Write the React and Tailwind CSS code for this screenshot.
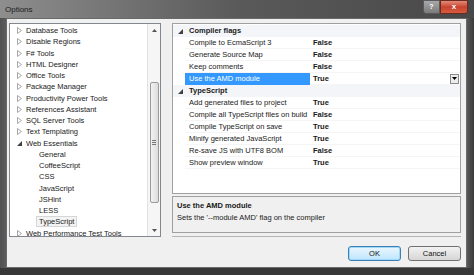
import React from 'react'

const treeItems = [
  { label: 'Database Tools', kind: 'closed' },
  { label: 'Disable Regions', kind: 'closed' },
  { label: 'F# Tools', kind: 'closed' },
  { label: 'HTML Designer', kind: 'closed' },
  { label: 'Office Tools', kind: 'closed' },
  { label: 'Package Manager', kind: 'closed' },
  { label: 'Productivity Power Tools', kind: 'closed' },
  { label: 'References Assistant', kind: 'closed' },
  { label: 'SQL Server Tools', kind: 'closed' },
  { label: 'Text Templating', kind: 'closed' },
  { label: 'Web Essentials', kind: 'open' },
  { label: 'General', kind: 'child' },
  { label: 'CoffeeScript', kind: 'child' },
  { label: 'CSS', kind: 'child' },
  { label: 'JavaScript', kind: 'child' },
  { label: 'JSHint', kind: 'child' },
  { label: 'LESS', kind: 'child' },
  { label: 'TypeScript', kind: 'child', selected: true },
  { label: 'Web Performance Test Tools', kind: 'closed' },
]

const props = [
  { cat: 'Compiler flags' },
  { name: 'Compile to EcmaScript 3', value: 'False' },
  { name: 'Generate Source Map', value: 'False' },
  { name: 'Keep comments', value: 'False' },
  { name: 'Use the AMD module', value: 'True', selected: true },
  { cat: 'TypeScript' },
  { name: 'Add generated files to project', value: 'True' },
  { name: 'Compile all TypeScript files on build', value: 'False' },
  { name: 'Compile TypeScript on save', value: 'True' },
  { name: 'Minify generated JavaScript', value: 'True' },
  { name: 'Re-save JS with UTF8 BOM', value: 'False' },
  { name: 'Show preview window', value: 'True' },
]

function Closed() {
  return (
    <svg width="5" height="7" viewBox="0 0 5 7">
      <path d="M0.5 0.5 L4.5 3.5 L0.5 6.5 Z" fill="none" stroke="#a6a6a6" strokeWidth="1" />
    </svg>
  )
}

function Open() {
  return (
    <svg width="5" height="5" viewBox="0 0 5 5">
      <path d="M5 0 L5 5 L0 5 Z" fill="#404040" />
    </svg>
  )
}

function Tree() {
  return (
    <div className="flex w-[152px] h-[214px] border border-[#828790] bg-white overflow-hidden">
      <div className="flex-1 pt-[1px] overflow-hidden">
        {treeItems.map((it) => (
          <div key={it.label} className="flex items-center h-[11.25px] whitespace-nowrap">
            {it.kind === 'child' ? (
              <div
                className={
                  'ml-[26px] px-[2px] h-[11px] flex items-center ' +
                  (it.selected ? 'bg-[#f3f3f3] border border-[#d6d6d6]' : 'border border-transparent')
                }
              >
                {it.label}
              </div>
            ) : (
              <>
                <div className="w-[16px] pl-[7px] flex items-center">
                  {it.kind === 'open' ? <Open /> : <Closed />}
                </div>
                <span>{it.label}</span>
              </>
            )}
          </div>
        ))}
      </div>
      <div className="w-[13px] flex flex-col items-center border-l border-[#e2e2e2] bg-[#f6f6f6]">
        <div className="h-[12px] flex items-center justify-center">
          <svg width="5" height="3" viewBox="0 0 5 3"><path d="M0 3 L2.5 0 L5 3 Z" fill="#555" /></svg>
        </div>
        <div className="mt-[46px] w-[9px] h-[121px] rounded-[2px] border border-[#9b9b9b] bg-gradient-to-r from-[#f2f2f2] to-[#dcdcdc] flex items-center justify-center">
          <div className="flex flex-col gap-[1px]">
            <div className="w-[4px] h-px bg-[#777]" />
            <div className="w-[4px] h-px bg-[#777]" />
            <div className="w-[4px] h-px bg-[#777]" />
          </div>
        </div>
        <div className="mt-auto h-[12px] flex items-center justify-center">
          <svg width="5" height="3" viewBox="0 0 5 3"><path d="M0 0 L2.5 3 L5 0 Z" fill="#555" /></svg>
        </div>
      </div>
    </div>
  )
}

function PropGrid() {
  return (
    <div className="flex flex-col w-[289px] h-[214px] border-b border-[#b5b5b5]">
      <div className="h-[171px] border border-[#a0a0a0] bg-white pt-[1px] overflow-hidden">
        {props.map((p, i) =>
          p.cat ? (
            <div key={i} className="flex items-center h-[12px] bg-[#f3f5f9]">
              <div className="w-[15px] flex justify-center"><Open /></div>
              <span className="font-bold pl-[1px]">{p.cat}</span>
            </div>
          ) : (
            <div key={i} className="flex h-[12px]">
              <div className="w-[12px] bg-white" />
              <div
                className={
                  'w-[125px] flex items-center pl-[4px] border-b ' +
                  (p.selected ? 'bg-[#3399ff] text-white border-[#3399ff]' : 'border-[#f5f5f5]')
                }
              >
                {p.name}
              </div>
              <div className="flex-1 flex items-center pl-[3px] border-b border-[#f5f5f5] font-bold">
                <span className="flex-1">{p.value}</span>
                {p.selected && (
                  <div className="mr-[1px] w-[9px] h-[10px] border border-[#8a8a8a] bg-[#ececec] flex items-center justify-center">
                    <svg width="5" height="3" viewBox="0 0 5 3"><path d="M0 0 L2.5 3 L5 0 Z" fill="#000" /></svg>
                  </div>
                )}
              </div>
            </div>
          )
        )}
      </div>
      <div className="mt-[2px] h-[37px] border border-[#a0a0a0] bg-[#f0f0f0] px-[4px] pt-[3px]">
        <div className="font-bold leading-[12px]">Use the AMD module</div>
        <div className="leading-[12px]">Sets the '--module AMD' flag on the compiler</div>
      </div>
    </div>
  )
}

export default function App() {
  return (
    <div className="w-[474px] h-[275px] flex flex-col bg-[#3e3e3e] font-['Liberation_Sans',Arial,sans-serif] text-[7.5px] text-[#1a1a1a] overflow-hidden">
      <div className="h-[18px] flex items-start bg-gradient-to-r from-[#8e8e8e] via-[#5a5a5a] to-[#484848]">
        <span className="ml-[5px] mt-[4px] text-[8px] text-[#1c1c1c]">Options</span>
        <div className="ml-auto mr-[6px] flex">
          <div className="w-[17px] h-[14px] rounded-bl-[3px] border border-[#5a5a5a] bg-gradient-to-b from-[#a9a9a9] to-[#7a7a7a] text-white text-[7px] font-bold flex items-center justify-center">?</div>
          <div className="w-[28px] h-[14px] rounded-br-[3px] border border-[#6b2a20] bg-gradient-to-b from-[#e38a78] via-[#c8432f] to-[#d85a3f] text-white text-[8px] font-bold flex items-center justify-center">x</div>
        </div>
      </div>
      <div className="flex flex-1">
        <div className="w-[6px] bg-gradient-to-r from-[#505050] to-[#5c5c5c]" />
        <div className="flex-1 flex flex-col bg-[#f0f0f0] border border-[#6a6a6a] pt-[4px] pl-[2px] pr-[5px]">
          <div className="flex gap-[11px]">
            <Tree />
            <PropGrid />
          </div>
          <div className="flex justify-end gap-[7px] mt-[9px]">
            <div className="w-[53px] h-[15px] rounded-[3px] border border-[#3c7fb1] bg-gradient-to-b from-[#eaf6fd] to-[#bee6fd] flex items-center justify-center text-[#111] shadow-[inset_0_0_0_1px_#9fd8fa]">OK</div>
            <div className="w-[53px] h-[15px] rounded-[3px] border border-[#707070] bg-gradient-to-b from-[#f2f2f2] to-[#d6d6d6] flex items-center justify-center text-[#111]">Cancel</div>
          </div>
        </div>
        <div className="w-[7px] bg-gradient-to-r from-[#585858] to-[#3a3a3a]" />
      </div>
      <div className="h-[7px] bg-[#383838]" />
    </div>
  )
}
